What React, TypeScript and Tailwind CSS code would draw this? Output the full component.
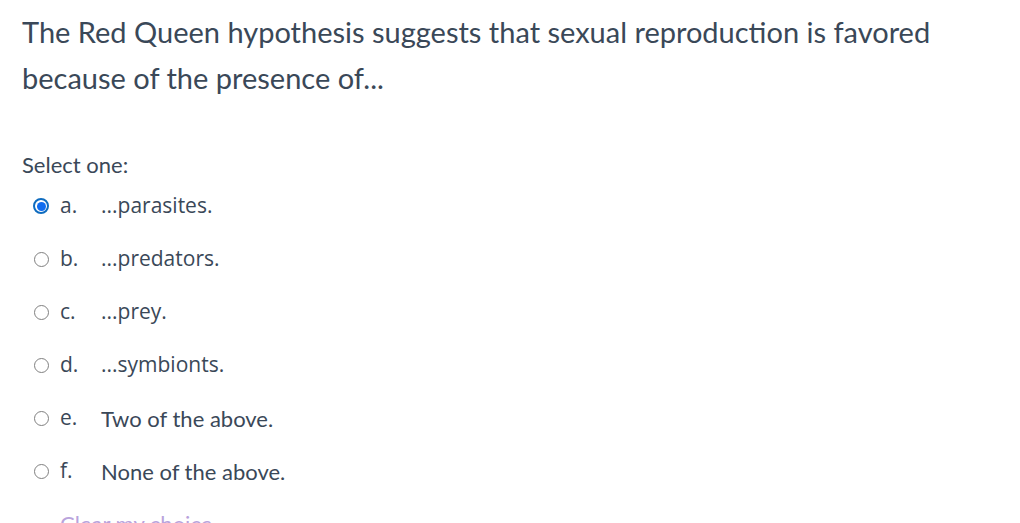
import React, { useState } from 'react'

type Option = { key: string; label: string; text: string; alt?: boolean }

const options: Option[] = [
  { key: 'a', label: 'a.', text: '...parasites.' },
  { key: 'b', label: 'b.', text: '...predators.' },
  { key: 'c', label: 'c.', text: '...prey.' },
  { key: 'd', label: 'd.', text: '...symbionts.' },
  { key: 'e', label: 'e.', text: 'Two of the above.', alt: true },
  { key: 'f', label: 'f.', text: 'None of the above.', alt: true },
]

const Radio: React.FC<{ checked: boolean }> = ({ checked }) =>
  checked ? (
    <span className="flex h-[16px] w-[16px] items-center justify-center rounded-full border-[2px] border-[#0f6cbf] bg-white">
      <span className="h-[9px] w-[9px] rounded-full bg-[#0f6cf0]" />
    </span>
  ) : (
    <span className="h-[15px] w-[15px] rounded-full border border-[#808080]" />
  )

export default function App() {
  const [choice, setChoice] = useState('a')

  return (
    <div className="h-[523px] w-[1020px] overflow-hidden bg-white px-[22px] pt-[9px] text-[#3a4858] [font-family:'Lato','Noto_Sans',sans-serif]">
      <div className="text-[29px] leading-[46px]">
        <p>The Red Queen hypothesis suggests that sexual reproduction is favored</p>
        <p>because of the presence of...</p>
      </div>

      <div className="mt-[50px] text-[22px] leading-[28px]">Select one:</div>

      <div className="mt-[13px] flex flex-col gap-[25px] pl-[10px]">
        {options.map((o) => (
          <label
            key={o.key}
            onClick={() => setChoice(o.key)}
            className="flex h-[28px] cursor-pointer items-center"
          >
            <span className="flex w-[18px] justify-center">
              <Radio checked={choice === o.key} />
            </span>
            <span className="ml-[10px] w-[41px] text-[21px] [font-family:'Open_Sans',sans-serif]">{o.label}</span>
            <span
              className={
                o.alt ? 'text-[22px]' : "text-[21px] [font-family:'Open_Sans',sans-serif]"
              }
            >
              {o.text}
            </span>
          </label>
        ))}
      </div>

      <div className="mt-[25px] pl-[38px] text-[22px] leading-[28px] text-[#b9a3dc]">Clear my choice</div>
    </div>
  )
}
